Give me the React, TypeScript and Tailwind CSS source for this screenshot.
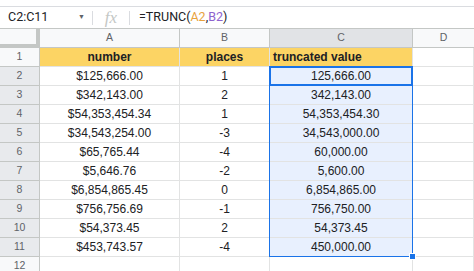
import React from "react";

const rows = [
  ["$125,666.00", "1", "125,666.00"],
  ["$342,143.00", "2", "342,143.00"],
  ["$54,353,454.34", "1", "54,353,454.30"],
  ["$34,543,254.00", "-3", "34,543,000.00"],
  ["$65,765.44", "-4", "60,000.00"],
  ["$5,646.76", "-2", "5,600.00"],
  ["$6,854,865.45", "0", "6,854,865.00"],
  ["$756,756.69", "-1", "756,750.00"],
  ["$54,373.45", "2", "54,373.45"],
  ["$453,743.57", "-4", "450,000.00"],
];

const cell = "border-r border-b border-[#e2e3e3] flex items-center";
const head = "border-r border-b border-[#c4c7c5] flex items-center justify-center text-[10.5px] text-[#5f6368]";

export default function App() {
  return (
    <div className="w-[474px] h-[271px] overflow-hidden bg-white font-['Liberation_Sans',Arial,sans-serif] text-[12px] text-[#202124]">
      {/* Toolbar edge */}
      <div className="h-[7px] border-b border-[#dadce0]" />

      {/* Formula bar */}
      <div className="h-[22px] flex items-center border-b border-[#c4c7c5] font-['Roboto',sans-serif] text-[12.5px]">
        <div className="w-[92px] flex items-center justify-between pl-[8px] pr-[7px]">
          <span>C2:C11</span>
          <span className="text-[7px] text-[#5f6368]">▼</span>
        </div>
        <div className="w-px h-[14px] bg-[#dadce0]" />
        <div className="w-[36px] text-center font-['Liberation_Serif',serif] italic text-[17px] text-[#c4c7c5]">fx</div>
        <div className="w-px h-[14px] bg-[#dadce0]" />
        <div className="pl-[9px]">
          =TRUNC(<span className="text-[#e8a33d]">A2</span>,<span className="text-[#8e63ce]">B2</span>)
        </div>
      </div>

      {/* Grid */}
      <div className="relative">
        <div className="grid grid-cols-[40px_140px_90px_143px_61px] auto-rows-[19px]">
          <div className="border-r-[4px] border-b-[4px] border-[#c4c7c5] bg-[#f8f9fa]" />
          <div className={`${head} bg-[#f8f9fa]`}>A</div>
          <div className={`${head} bg-[#f8f9fa]`}>B</div>
          <div className={`${head} bg-[#e1e3e6]`}>C</div>
          <div className={`${head} bg-[#f8f9fa] border-r-0`}>D</div>

          <div className={`${head} bg-[#f8f9fa]`}>1</div>
          <div className={`${cell} justify-center bg-[#fcd464] font-bold`}>number</div>
          <div className={`${cell} justify-center bg-[#fcd464] font-bold`}>places</div>
          <div className={`${cell} pl-[3px] bg-[#fcd464] font-bold`}>truncated value</div>
          <div className={cell} />

          {rows.map((r, i) => (
            <React.Fragment key={i}>
              <div className={`${head} bg-[#e8eaed]`}>{i + 2}</div>
              <div className={`${cell} justify-center`}>{r[0]}</div>
              <div className={`${cell} justify-center`}>{r[1]}</div>
              <div className={`${cell} justify-center bg-[#e8f0fe]`}>{r[2]}</div>
              <div className={cell} />
            </React.Fragment>
          ))}

          <div className={`${head} bg-[#f8f9fa]`}>12</div>
          <div className={cell} />
          <div className={cell} />
          <div className={cell} />
          <div className={cell} />
        </div>

        {/* Selection overlay C2:C11 */}
        <div className="absolute left-[269px] top-[37px] w-[144px] h-[191px] pointer-events-none border border-[#1a73e8]">
          <div className="h-[20px] border-2 border-[#1a73e8] -m-px" />
          <div className="absolute -right-[4px] -bottom-[4px] w-[7px] h-[7px] bg-[#1a73e8] border border-white" />
        </div>
      </div>
    </div>
  );
}
